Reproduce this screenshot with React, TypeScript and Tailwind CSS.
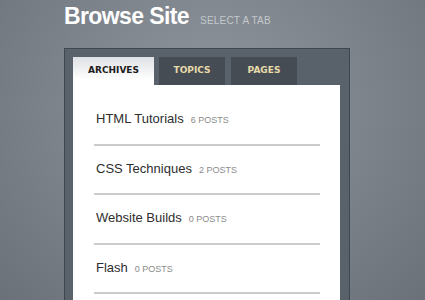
import React from "react";

const archives = [
    {name: "HTML Tutorials", count: 6},
    {name: "CSS Techniques", count: 2},
    {name: "Website Builds", count: 0},
    {name: "Flash", count: 0},
];

export default function App() {
    return (
        <div
            className="w-[425px] h-[300px] overflow-hidden pl-[64px] bg-[radial-gradient(ellipse_at_50%_35%,#8f969d_0%,#7b8289_55%,#6a7178_100%)] font-['Liberation_Sans',Arial,sans-serif]">
            <div className="h-[48px] pt-[5px] flex items-baseline">
                <h1 className="text-[23px] leading-[23px] font-bold text-white tracking-[-0.6px]">Browse Site</h1>
                <span className="ml-[11px] text-[10px] uppercase text-[#c3c8cd] tracking-[0.2px]">Select a tab</span>
            </div>

            <div className="w-[286px] border border-[#40464d] bg-[#59616a] pt-[8px] pl-[8px] pr-[9px]">
                <div className="flex font-['DejaVu_Sans',Verdana,sans-serif] text-[9px] font-bold">
                    <button
                        className="w-[81px] h-[28px] flex items-center justify-center uppercase bg-[linear-gradient(#dde0e4,#ffffff_80%)] text-[#1d1d1d]">
                        Archives
                    </button>
                    <button
                        className="w-[66px] h-[28px] ml-[5px] flex items-center justify-center uppercase bg-[#464c54] text-[#e6dbab]">
                        Topics
                    </button>
                    <button
                        className="w-[66px] h-[28px] ml-[6px] flex items-center justify-center uppercase bg-[#464c54] text-[#e6dbab]">
                        Pages
                    </button>
                </div>

                <ul className="bg-white pt-[11px] pl-[21px] pr-[20px] h-[230px]">
                    {archives.map((a) => (
                        <li key={a.name}
                            className="flex items-baseline pl-[2px] pt-[15px] pb-[16px] border-b-2 border-[#cbcbcb]">
                            <span className="text-[13px] leading-[16px] text-[#2e2e2e]">{a.name}</span>
                            <span className="ml-[7px] text-[9px] uppercase text-[#8b8b8b]">{a.count} posts</span>
                        </li>
                    ))}
                </ul>
            </div>
        </div>
    );
}
